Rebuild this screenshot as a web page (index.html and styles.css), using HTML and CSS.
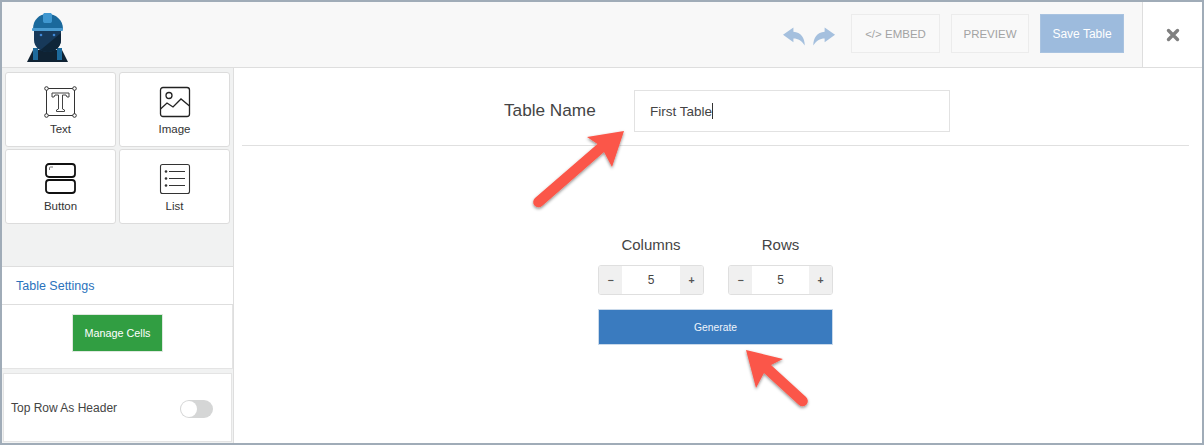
FILE: index.html
```html
<!DOCTYPE html>
<html lang="en">
<head>
<meta charset="utf-8">
<title>Table Builder</title>
<link rel="stylesheet" href="styles.css">
</head>
<body>
<div class="frame">
  <header class="topbar">
    <div class="logo-cell">
      <svg class="logo" width="41" height="49" viewBox="0 0 41 49">
        <path d="M0 49 L6 37 L35 37 L41 49 Z" fill="#0f2233"/>
        <rect x="6" y="35" width="5" height="12" fill="#1d6a9c"/>
        <rect x="30" y="35" width="5" height="12" fill="#1d6a9c"/>
        <path d="M7 17 H34 V27 C34 34 28 39 20.500 39 C13 39 7 34 7 27 Z" fill="#17395a"/>
        <path d="M34 20 V27 C34 34 28 39 20.500 39 C17.500 39 15.500 38 13.500 37 Z" fill="#0e2539"/>
        <path d="M6 16 C6 7 12 1 20.500 1 C29 1 36 7 36 16 Z" fill="#1b699c"/>
        <rect x="5" y="15" width="31" height="3" rx="1" fill="#4a9bd0"/>
        <path d="M16 2 C16 0.500 17 0 18 0 H23 C24 0 25 0.500 25 2 V8 C25 9.500 24 10 23 10 H18 C17 10 16 9.500 16 8 Z" fill="#3f97d0"/>
        <circle cx="14" cy="22" r="1.300" fill="#3f87d6"/>
        <circle cx="27" cy="22" r="1.300" fill="#3f87d6"/>
      </svg>
    </div>
    <div class="actions">
      <svg class="history" width="53" height="20" viewBox="0 0 56 20">
        <path d="M0 7.500 L11 0 V4.500 C19 5 23 11 23 19 C20 14 16 11.500 11 11.500 V15.500 Z" fill="#a5c0de"/>
        <path d="M55 7.500 L44 0 V4.500 C36 5 32 11 32 19 C35 14 39 11.500 44 11.500 V15.500 Z" fill="#a5c0de"/>
      </svg>
      <span class="btn btn-ghost btn-embed">&lt;/&gt; EMBED</span>
      <span class="btn btn-ghost btn-preview">PREVIEW</span>
      <span class="btn btn-save">Save Table</span>
    </div>
    <div class="close-cell">
      <svg width="14" height="14" viewBox="0 0 14 14"><path d="M2.500 2.500 L11.500 11.500 M11.500 2.500 L2.500 11.500" stroke="#7f7f7f" stroke-width="3.400" stroke-linecap="round"/></svg>
    </div>
  </header>
  <div class="body">
    <aside class="sidebar">
      <div class="palette">
        <div class="tile">
          <svg width="34" height="32" viewBox="0 0 34 32" fill="none" stroke="#333" stroke-width="1">
            <rect x="2.500" y="2.500" width="28" height="27"/>
            <g fill="#fff"><circle cx="2.500" cy="2.500" r="1.800"/><circle cx="30.500" cy="2.500" r="1.800"/><circle cx="2.500" cy="29.500" r="1.800"/><circle cx="30.500" cy="29.500" r="1.800"/></g>
            <path d="M8 11 V7 H25 V11 H23 L22 9 H18.500 V23 L20.500 24 V25.500 H12.500 V24 L14.500 23 V9 H11 L10 11 Z" stroke="#444"/>
          </svg>
          <span class="tile-label">Text</span>
        </div>
        <div class="tile">
          <svg width="32" height="32" viewBox="0 0 32 32" fill="none" stroke="#222" stroke-width="1.300">
            <rect x="1.500" y="1.500" width="29" height="29" rx="2.500"/>
            <circle cx="10" cy="9.500" r="3"/>
            <path d="M1.500 23 L8 17 L14 21 L22 13 L30.500 20"/>
          </svg>
          <span class="tile-label">Image</span>
        </div>
        <div class="tile">
          <svg width="32" height="32" viewBox="0 0 32 32" fill="none" stroke="#111" stroke-width="1.800">
            <rect x="1" y="1" width="29" height="13" rx="3"/>
            <rect x="1" y="17" width="29" height="13" rx="3"/>
            <path d="M4.500 7 V5 Q4.500 4 5.500 4 H8" stroke="#777" stroke-width="1"/>
          </svg>
          <span class="tile-label">Button</span>
        </div>
        <div class="tile">
          <svg width="32" height="32" viewBox="0 0 32 32" fill="none" stroke="#333" stroke-width="1.100">
            <rect x="1.500" y="1.500" width="29" height="29" rx="2"/>
            <path d="M10 8.500 H26 M10 15.500 H26 M10 22.500 H26"/>
            <g fill="#333" stroke="none"><circle cx="7" cy="8.500" r="1.300"/><circle cx="7" cy="15.500" r="1.300"/><circle cx="7" cy="22.500" r="1.300"/></g>
          </svg>
          <span class="tile-label">List</span>
        </div>
      </div>
      <div class="settings-link">Table Settings</div>
      <div class="manage-panel"><span class="btn-manage">Manage Cells</span></div>
      <div class="option-card">
        <span class="option-label">Top Row As Header</span>
        <span class="switch"><span class="knob"></span></span>
      </div>
    </aside>
    <main class="content">
      <div class="name-row">
        <label class="name-label">Table Name</label>
        <div class="name-input">First Table<span class="caret"></span></div>
      </div>
      <div class="generator">
        <div class="steppers">
          <div class="stepper-group">
            <div class="stepper-title">Columns</div>
            <div class="stepper"><span class="step">−</span><span class="value">5</span><span class="step">+</span></div>
          </div>
          <div class="stepper-group">
            <div class="stepper-title">Rows</div>
            <div class="stepper"><span class="step">−</span><span class="value">5</span><span class="step">+</span></div>
          </div>
        </div>
        <div class="btn-generate">Generate</div>
      </div>
    </main>
  </div>
  <svg class="annotations" width="1204" height="445" viewBox="0 0 1204 445">
    <defs><filter id="shade" x="-20%" y="-20%" width="140%" height="140%"><feDropShadow dx="0" dy="1.500" stdDeviation="1.500" flood-color="#000" flood-opacity="0.450"/></filter></defs>
    <g filter="url(#shade)">
      <path d="M624 131 L587 137 L597.500 144 L535 198 A5 5 0 0 0 542 206 L604 152 L612 167 Z" fill="#fb5648"/>
      <path d="M746 350 L783 359 L771 365 L806 397 A5 5 0 0 1 799 405 L764 373 L756 388 Z" fill="#fb5648"/>
    </g>
  </svg>
</div>
</body>
</html>
```
FILE: styles.css
```css
* { box-sizing: border-box; }
html, body { margin: 0; padding: 0; }
body { font-family: "Liberation Sans", Arial, sans-serif; color: #333; background: #fff; }
.frame { position: relative; width: 1204px; height: 445px; border: 2px solid #a0acb8; display: flex; flex-direction: column; overflow: hidden; background: #fff; }
.topbar { height: 66px; flex: none; display: flex; align-items: stretch; background: #f8f8f8; border-bottom: 1px solid #dedede; }
.logo-cell { padding: 11px 0 0 25px; width: 200px; }
.logo { display: block; }
.actions { flex: 1; display: flex; align-items: flex-start; justify-content: flex-end; padding: 12px 18px 0 0; }
.history { margin: 13px 15px 0 0; }
.btn { height: 39px; display: flex; align-items: center; justify-content: center; font-size: 11.500px; }
.btn-ghost { border: 1px solid #ececec; color: #a3a3a3; background: #f9f9f9; }
.btn-embed { width: 89px; margin-right: 11px; }
.btn-preview { width: 78px; margin-right: 11px; }
.btn-save { width: 84px; background: #9dbbdd; color: #fff; border: 1px solid #a9c3e0; font-size: 12px; }
.close-cell { width: 60px; flex: none; background: #fff; border-left: 1px solid #dedede; display: flex; align-items: center; justify-content: center; }
.body { flex: 1; display: flex; min-height: 0; }
.sidebar { width: 232px; flex: none; border-right: 1px solid #dedede; background: #f1f2f2; display: flex; flex-direction: column; }
.palette { height: 199px; flex: none; padding: 4px 3px 0; display: grid; grid-template-columns: 111px 111px; grid-auto-rows: 75px; gap: 2px 3px; align-content: start; border-bottom: 1px solid #dedede; }
.tile { background: #fff; border: 1px solid #dcdcdc; border-radius: 3px; display: flex; flex-direction: column; align-items: center; padding-top: 13px; }
.tile svg { display: block; }
.tile-label { font-size: 11.500px; color: #333; margin-top: 5px; line-height: 13px; }
.settings-link { height: 38px; flex: none; background: #fff; border-bottom: 1px solid #dedede; color: #2a72bc; font-size: 12.500px; display: flex; align-items: center; padding: 0 0 0 14px; }
.manage-panel { height: 64px; flex: none; background: #fff; border-right: 1px solid #e4e4e4; border-bottom: 1px solid #e4e4e4; display: flex; justify-content: center; padding-top: 9px; padding-left: 1px; }
.btn-manage { width: 91px; height: 38px; background: #319e42; color: #fff; font-size: 10.800px; display: flex; align-items: center; justify-content: center; border: 1px solid #dfe8df; }
.option-card { margin: 4px 1px 0; height: 69px; background: #fff; border: 1px solid #e4e4e4; display: flex; align-items: center; justify-content: space-between; padding: 0 18px 0 7px; }
.option-label { font-size: 12px; color: #444; }
.switch { width: 33px; height: 18px; border-radius: 9px; background: #d5d6d6; display: block; padding: 1px; margin-top: 2px; }
.knob { display: block; width: 16px; height: 16px; border-radius: 50%; background: #fff; }
.content { flex: 1; padding: 0 13px 0 8px; background: #fff; }
.name-row { height: 78px; display: flex; align-items: flex-start; border-bottom: 1px solid #e0e0e0; width: 947px; padding: 22px 0 0 262px; }
.name-label { font-size: 17.200px; color: #444; width: 130px; margin-top: 10px; line-height: 20px; }
.name-input { width: 316px; height: 42px; border: 1px solid #e2e2e2; padding-left: 15px; font-size: 13.500px; color: #444; display: flex; align-items: center; background: #fff; }
.caret { display: inline-block; width: 1px; height: 16px; background: #333; }
.generator { margin: 89px 0 0 356px; width: 235px; }
.steppers { display: grid; grid-template-columns: 106px 105px; justify-content: space-between; }
.stepper-group { text-align: center; }
.stepper-title { font-size: 15px; line-height: 20px; color: #444; margin-bottom: 10px; }
.stepper { display: flex; height: 30px; border: 1px solid #dfdfdf; border-radius: 3px; overflow: hidden; background: #fff; }
.step { width: 23px; flex: none; background: #f0f0f0; display: flex; align-items: center; justify-content: center; font-size: 10.500px; font-weight: 700; color: #555; }
.value { flex: 1; display: flex; align-items: center; justify-content: center; font-size: 12px; color: #444; }
.btn-generate { margin-top: 14px; height: 36px; background: #3a7bbf; border: 1px solid #c9d9ea; color: #eef4fb; font-size: 10.300px; display: flex; align-items: center; justify-content: center; }
.annotations { position: absolute; left: -2px; top: -2px; pointer-events: none; }
```
